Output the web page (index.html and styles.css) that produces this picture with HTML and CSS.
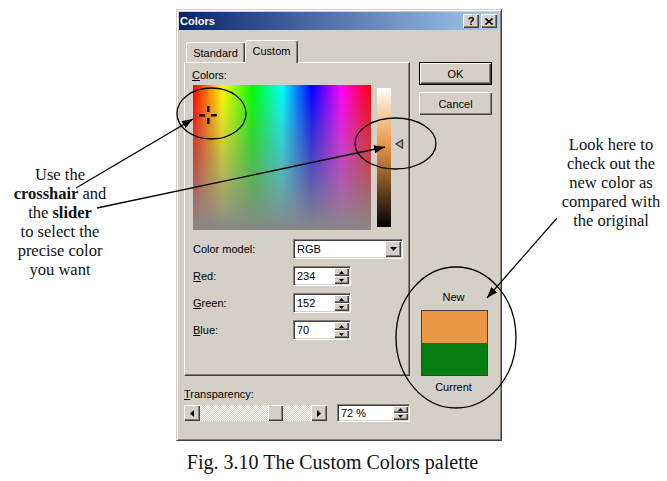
FILE: index.html
```html
<!DOCTYPE html>
<html>
<head>
<meta charset="utf-8">
<title>The Custom Colors palette</title>
<link rel="stylesheet" href="styles.css">
</head>
<body>
<div class="figure">
  <div class="stage">
    <p class="note note-left">Use the<br><b>crosshair</b> and<br>the <b>slider</b><br>to select the<br>precise color<br>you want</p>

    <div class="dialog">
      <div class="titlebar">
        <span class="title">Colors</span>
        <span class="tbtn">?</span>
        <span class="tbtn"><svg width="8" height="7" viewBox="0 0 8 7"><path d="M0.5 0.5 L7.5 6.5 M7.5 0.5 L0.5 6.5" stroke="#000" stroke-width="1.6"/></svg></span>
      </div>
      <div class="body">
        <div class="main">
          <div class="tabs">
            <span class="tab tab-std">Standard</span>
            <span class="tab tab-active">Custom</span>
          </div>
          <div class="panel">
            <div class="lbl"><u>C</u>olors:</div>
            <div class="picker">
              <div class="spectrum">
                <svg class="cross" width="20" height="20" viewBox="0 0 20 20">
                  <rect x="9" y="1" width="2.5" height="6" fill="#000"/>
                  <rect x="9" y="13" width="2.5" height="6" fill="#000"/>
                  <rect x="1" y="9" width="6" height="2.5" fill="#000"/>
                  <rect x="13" y="9" width="6" height="2.5" fill="#000"/>
                </svg>
              </div>
              <div class="lum"></div>
              <svg class="lum-arrow" width="9" height="10" viewBox="0 0 9 10"><polygon points="1,5 7.5,1 7.5,9" fill="#b8b4ac" stroke="#303030" stroke-width="1.2"/></svg>
            </div>
            <div class="fields">
              <span class="flabel">Color model:</span>
              <div class="combo"><span class="ctext">RGB</span><span class="ddbtn"><svg width="7" height="4" viewBox="0 0 7 4"><polygon points="0,0 7,0 3.5,4" fill="#000"/></svg></span></div>

              <span class="flabel"><u>R</u>ed:</span>
              <div class="spin"><span class="ctext">234</span><span class="spinbtns"><span class="sb"><svg width="5" height="3" viewBox="0 0 5 3"><polygon points="2.5,0 5,3 0,3" fill="#000"/></svg></span><span class="sb"><svg width="5" height="3" viewBox="0 0 5 3"><polygon points="0,0 5,0 2.5,3" fill="#000"/></svg></span></span></div>

              <span class="flabel"><u>G</u>reen:</span>
              <div class="spin"><span class="ctext">152</span><span class="spinbtns"><span class="sb"><svg width="5" height="3" viewBox="0 0 5 3"><polygon points="2.5,0 5,3 0,3" fill="#000"/></svg></span><span class="sb"><svg width="5" height="3" viewBox="0 0 5 3"><polygon points="0,0 5,0 2.5,3" fill="#000"/></svg></span></span></div>

              <span class="flabel"><u>B</u>lue:</span>
              <div class="spin"><span class="ctext">70</span><span class="spinbtns"><span class="sb"><svg width="5" height="3" viewBox="0 0 5 3"><polygon points="2.5,0 5,3 0,3" fill="#000"/></svg></span><span class="sb"><svg width="5" height="3" viewBox="0 0 5 3"><polygon points="0,0 5,0 2.5,3" fill="#000"/></svg></span></span></div>
            </div>
          </div>
          <div class="trans">
            <div class="lbl"><u>T</u>ransparency:</div>
            <div class="trow">
              <div class="scroll">
                <span class="sbtn"><svg width="4" height="7" viewBox="0 0 4 7"><polygon points="4,0 4,7 0,3.5" fill="#000"/></svg></span>
                <span class="track"><span class="thumb"></span></span>
                <span class="sbtn"><svg width="4" height="7" viewBox="0 0 4 7"><polygon points="0,0 0,7 4,3.5" fill="#000"/></svg></span>
              </div>
              <div class="spin spin-wide"><span class="ctext">72 %</span><span class="spinbtns"><span class="sb"><svg width="5" height="3" viewBox="0 0 5 3"><polygon points="2.5,0 5,3 0,3" fill="#000"/></svg></span><span class="sb"><svg width="5" height="3" viewBox="0 0 5 3"><polygon points="0,0 5,0 2.5,3" fill="#000"/></svg></span></span></div>
            </div>
          </div>
        </div>
        <div class="side">
          <button class="btn btn-default">OK</button>
          <button class="btn">Cancel</button>
          <div class="compare">
            <div class="clabel">New</div>
            <div class="swatch"><div class="sw-new"></div><div class="sw-cur"></div></div>
            <div class="clabel clabel-cur">Current</div>
          </div>
        </div>
      </div>
    </div>

    <p class="note note-right">Look here to<br>check out the<br>new color as<br>compared with<br>the original</p>
  </div>

  <p class="caption">Fig. 3.10 The Custom Colors palette</p>

  <svg class="overlay" width="667" height="481" viewBox="0 0 667 481">
    <defs>
      <marker id="ah" markerWidth="11" markerHeight="8" refX="11" refY="4" orient="auto" markerUnits="userSpaceOnUse">
        <path d="M0,0 L11,4 L0,8 z" fill="#000"/>
      </marker>
    </defs>
    <ellipse cx="211.5" cy="113.5" rx="34.5" ry="25.5" fill="none" stroke="#000" stroke-width="1.3"/>
    <ellipse cx="395.5" cy="143.5" rx="40.5" ry="25.5" fill="none" stroke="#000" stroke-width="1.3"/>
    <ellipse cx="456" cy="337.5" rx="60" ry="70.5" fill="none" stroke="#000" stroke-width="1.3"/>
    <line x1="76" y1="188" x2="193" y2="119" stroke="#000" stroke-width="1.3" marker-end="url(#ah)"/>
    <line x1="97" y1="208" x2="385" y2="147" stroke="#000" stroke-width="1.3" marker-end="url(#ah)"/>
    <line x1="557" y1="218" x2="487" y2="298" stroke="#000" stroke-width="1.2" marker-end="url(#ah)"/>
  </svg>
</div>
</body>
</html>
```
FILE: styles.css
```css
* { box-sizing: border-box; }
html, body { margin: 0; padding: 0; background: #fff; }

.figure { position: relative; width: 667px; height: 481px; overflow: hidden; }

.stage {
  display: grid;
  grid-template-columns: 176px 326px 165px;
  align-items: start;
  padding-top: 9px;
}

.note {
  margin: 0;
  font-family: "Liberation Serif", "Times New Roman", serif;
  font-size: 16.5px;
  line-height: 19px;
  color: #111;
  text-align: center;
}
.note-left { width: 120px; margin-top: 156px; }
.note-right { width: 112px; margin-left: 53px; margin-top: 126px; }

.caption {
  margin: 10px 0 0;
  padding-right: 2px;
  text-align: center;
  font-family: "Liberation Serif", "Times New Roman", serif;
  font-size: 20px;
  line-height: 22px;
  color: #111;
}

.overlay { position: absolute; left: 0; top: 0; pointer-events: none; }

/* dialog */
.dialog {
  width: 326px;
  height: 432px;
  background: #d4d0c8;
  border: 1px solid;
  border-color: #d4d0c8 #404040 #404040 #d4d0c8;
  box-shadow: inset 1px 1px #fff, inset -1px -1px #808080;
  padding: 2px;
  font-family: "Liberation Sans", Arial, sans-serif;
  font-size: 11px;
  color: #000;
  display: flex;
  flex-direction: column;
}

.titlebar {
  height: 18px;
  background: linear-gradient(to right, #0a246a, #a6caf0);
  display: flex;
  align-items: center;
  gap: 2px;
  padding: 0 2px 0 1px;
}
.title { flex: 1; color: #fff; font-weight: bold; font-size: 11px; }
.tbtn {
  width: 16px;
  height: 14px;
  background: #d4d0c8;
  box-shadow: inset 1px 1px #fff, inset -1px -1px #404040, inset -2px -2px #808080;
  display: flex;
  align-items: center;
  justify-content: center;
  font-weight: bold;
  font-size: 11px;
  line-height: 1;
}

.body {
  flex: 1;
  display: flex;
  gap: 9px;
  padding: 10px 7px 0 5px;
}

.main { width: 226px; display: flex; flex-direction: column; }

.tabs {
  display: flex;
  align-items: flex-end;
  height: 22px;
  padding-left: 2px;
}
.tab {
  height: 20px;
  display: flex;
  align-items: center;
  justify-content: center;
  border: 1px solid;
  border-bottom: none;
  border-color: #fff #404040 transparent #fff;
  box-shadow: inset -1px 0 #808080;
  border-radius: 3px 3px 0 0;
  background: #d4d0c8;
}
.tab-std { width: 59px; }
.tab-active {
  width: 53px;
  height: 23px;
  margin-bottom: -1px;
  padding-bottom: 2px;
  position: relative;
  z-index: 1;
}

.panel {
  height: 314px;
  border: 1px solid;
  border-color: #fff #404040 #404040 #fff;
  box-shadow: inset -1px -1px #808080;
  padding: 6px 0 0 7px;
}

.lbl { line-height: 13px; height: 13px; }

.picker { display: flex; align-items: flex-start; margin-top: 3px; margin-left: 1px; }
.spectrum {
  position: relative;
  width: 178px;
  height: 145px;
  background:
    linear-gradient(to bottom, rgba(136,136,136,0), #888),
    linear-gradient(to right, #f00, #ff0, #0f0, #0ff, #00f, #f0f, #f00);
}
.cross { position: absolute; left: 5px; top: 20px; }
.lum {
  width: 14px;
  height: 139px;
  margin: 3px 0 0 6px;
  background: linear-gradient(to bottom, #fffdfa, #ea9846 40%, #000);
}
.lum-arrow { margin: 54px 0 0 4px; }

.fields {
  display: grid;
  grid-template-columns: 100px auto;
  row-gap: 7px;
  align-items: center;
  justify-items: start;
  margin: 9px 0 0 1px;
}
.flabel { line-height: 13px; }

.combo, .spin {
  height: 20px;
  background: #fff;
  border: 1px solid;
  border-color: #808080 #fff #fff #808080;
  box-shadow: inset 1px 1px #404040, inset -1px -1px #d4d0c8;
  display: flex;
  align-items: center;
  padding: 1px 1px 1px 3px;
}
.combo { width: 110px; }
.spin { width: 58px; }
.ctext { flex: 1; line-height: 13px; }

.ddbtn, .sb, .sbtn, .thumb, .btn {
  background: #d4d0c8;
  box-shadow: inset 1px 1px #fff, inset -1px -1px #404040, inset -2px -2px #808080;
}
.ddbtn {
  width: 16px;
  height: 16px;
  display: flex;
  align-items: center;
  justify-content: center;
}
.spinbtns { display: flex; flex-direction: column; width: 15px; height: 16px; }
.sb {
  height: 8px;
  display: flex;
  align-items: center;
  justify-content: center;
}

.trans { margin-top: 12px; }
.trow { display: flex; align-items: center; margin-top: 3px; height: 18px; }
.scroll { display: flex; width: 143px; height: 16px; }
.sbtn {
  width: 16px;
  height: 16px;
  display: flex;
  align-items: center;
  justify-content: center;
}
.track {
  flex: 1;
  display: flex;
  background: repeating-conic-gradient(#fff 0 25%, #d4d0c8 0 50%) 0 0 / 2px 2px;
}
.thumb { width: 15px; height: 16px; margin-left: 68px; }
.spin-wide { width: 73px; height: 18px; margin-left: 10px; }
.spin-wide .spinbtns { height: 14px; }
.spin-wide .sb { height: 7px; }

.side {
  width: 73px;
  display: flex;
  flex-direction: column;
  padding-top: 22px;
}
.btn {
  width: 73px;
  height: 23px;
  border: none;
  padding: 0;
  font-family: inherit;
  font-size: 11px;
  color: #000;
}
.btn + .btn { margin-top: 7px; }
.btn-default { border: 1px solid #000; }

.compare { margin-top: 176px; margin-left: 2px; width: 67px; }
.clabel { line-height: 13px; text-align: center; padding-right: 2px; }
.swatch {
  margin-top: 6px;
  height: 66px;
  border: 1px solid #404040;
  display: flex;
  flex-direction: column;
}
.sw-new { flex: 1; background: #ea9846; }
.sw-cur { flex: 1; background: #087d12; }
.clabel-cur { margin-top: 5px; }
```
